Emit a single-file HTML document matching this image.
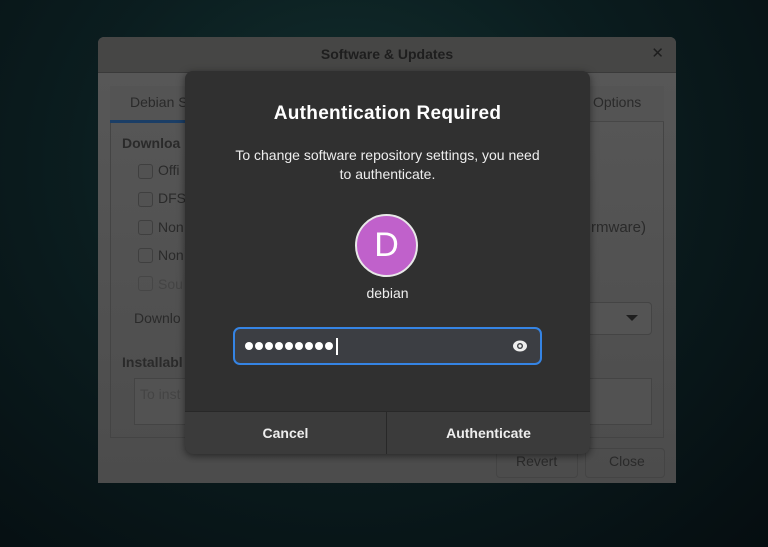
<!DOCTYPE html>
<html><head><style>
*{margin:0;padding:0;box-sizing:border-box}
body{width:768px;height:547px;overflow:hidden;font-family:"Liberation Sans","DejaVu Sans",sans-serif;background:radial-gradient(ellipse at 45% 30%,#12302f 0%,#0b1d1f 45%,#050d10 100%);position:relative}
.a{position:absolute}
.win{left:98px;top:37px;width:578px;height:446px;background:linear-gradient(#585858,#4c4c4c);border-radius:6px 6px 0 0;overflow:hidden}
.title{left:0;top:0;width:578px;height:36px;background:#464645;border-radius:6px 6px 0 0;border-bottom:1px solid #3a3a3a;color:#1e1e1e;font-weight:bold;font-size:14px;text-align:center;line-height:34px}
.t{color:#2a2a2a;font-size:14px}
.cb{width:15px;height:15px;border:1px solid #3f3f3f;border-radius:3px;background:#525252}
.dlg{left:185px;top:71px;width:405px;height:383px;background:#303030;border-radius:8px;box-shadow:0 2px 8px rgba(0,0,0,.5);overflow:hidden}
.btn{top:340px;height:43px;background:#3b3b3b;color:#eee;font-weight:bold;font-size:14px;text-align:center;line-height:43px;border-top:1px solid #282828}
</style></head><body>
<div class="a win">
 <div class="a title">Software &amp; Updates<span class="a" style="right:12px;top:0;color:#1e1e1e;font-size:15px">✕</span></div>
 <div class="a" style="left:12px;top:49px;width:554px;height:352px;border:1px solid #444"></div>
 <div class="a" style="left:12px;top:49px;width:554px;height:36px;background:#545454;border-bottom:1px solid #474747"></div>
 <div class="a" style="left:12px;top:83px;width:80px;height:3px;background:#1b3e66"></div>
 <div class="a t" style="left:32px;top:57px">Debian S</div>
 <div class="a t" style="left:495px;top:57px">Options</div>
 <div class="a t" style="left:24px;top:98px;font-weight:bold">Downloa</div>
 <div class="a cb" style="left:40px;top:127px"></div><div class="a t" style="left:60px;top:125px">Offi</div>
 <div class="a cb" style="left:40px;top:155px"></div><div class="a t" style="left:60px;top:153px">DFS</div>
 <div class="a cb" style="left:40px;top:183px"></div><div class="a t" style="left:60px;top:182px">Non</div>
 <div class="a cb" style="left:40px;top:211px"></div><div class="a t" style="left:60px;top:210px">Non</div>
 <div class="a cb" style="left:40px;top:239px;opacity:.6"></div><div class="a t" style="left:60px;top:239px;color:#444">Sou</div>
 <div class="a t" style="left:493px;top:182px;font-size:15px">rmware)</div>
 <div class="a t" style="left:36px;top:273px">Downlo</div>
 <div class="a" style="left:480px;top:265px;width:74px;height:33px;border:1px solid #444;border-radius:4px;background:#545454"></div>
 <div class="a" style="left:528px;top:278px;border-left:6px solid transparent;border-right:6px solid transparent;border-top:6px solid #1e1e1e"></div>
 <div class="a t" style="left:24px;top:317px;font-weight:bold">Installabl</div>
 <div class="a" style="left:36px;top:341px;width:518px;height:47px;border:1px solid #444;background:#525252"></div>
 <div class="a t" style="left:42px;top:349px;color:#444">To inst</div>
 <div class="a" style="left:398px;top:411px;width:82px;height:30px;border:1px solid #444;border-radius:4px"></div>
 <div class="a t" style="left:418px;top:416px">Revert</div>
 <div class="a" style="left:487px;top:411px;width:80px;height:30px;border:1px solid #444;border-radius:4px"></div>
 <div class="a t" style="left:511px;top:416px">Close</div>
</div>
<div class="a dlg">
 <div class="a" style="left:0;top:32px;width:405px;text-align:center;color:#fff;font-weight:bold;font-size:19px;letter-spacing:.3px">Authentication Required</div>
 <div class="a" style="left:0;top:75px;width:405px;text-align:center;color:#eee;font-size:14px;line-height:19px">To change software repository settings, you need<br>to authenticate.</div>
 <div class="a" style="left:170px;top:143px;width:63px;height:63px;border-radius:50%;background:#c061cb;border:2px solid #e8e8e8;color:#fff;font-size:34px;text-align:center;line-height:58px">D</div>
 <div class="a" style="left:0;top:214px;width:405px;text-align:center;color:#eee;font-size:14px">debian</div>
 <div class="a" style="left:48px;top:256px;width:309px;height:38px;background:#3c3e43;border:2px solid #3584e4;border-radius:7px"></div>
 <div class="a" style="left:60px;top:265px;height:20px;display:flex;align-items:center;gap:2px">
  <i style="width:8px;height:8px;border-radius:50%;background:#fff"></i><i style="width:8px;height:8px;border-radius:50%;background:#fff"></i><i style="width:8px;height:8px;border-radius:50%;background:#fff"></i><i style="width:8px;height:8px;border-radius:50%;background:#fff"></i><i style="width:8px;height:8px;border-radius:50%;background:#fff"></i><i style="width:8px;height:8px;border-radius:50%;background:#fff"></i><i style="width:8px;height:8px;border-radius:50%;background:#fff"></i><i style="width:8px;height:8px;border-radius:50%;background:#fff"></i><i style="width:8px;height:8px;border-radius:50%;background:#fff"></i>
  <i style="width:2px;height:17px;background:#fff;margin-left:1px"></i>
 </div>
 <svg class="a" style="left:327px;top:267px" width="16" height="16" viewBox="0 0 16 16"><ellipse cx="8" cy="8" rx="7" ry="5.5" fill="#eee"/><circle cx="8" cy="8" r="3" fill="#3c3e43"/><circle cx="8" cy="8" r="1.6" fill="#eee"/></svg>
 <div class="a btn" style="left:0;width:202px;border-right:1px solid #282828">Cancel</div>
 <div class="a btn" style="left:202px;width:203px">Authenticate</div>
</div>
</body></html>
